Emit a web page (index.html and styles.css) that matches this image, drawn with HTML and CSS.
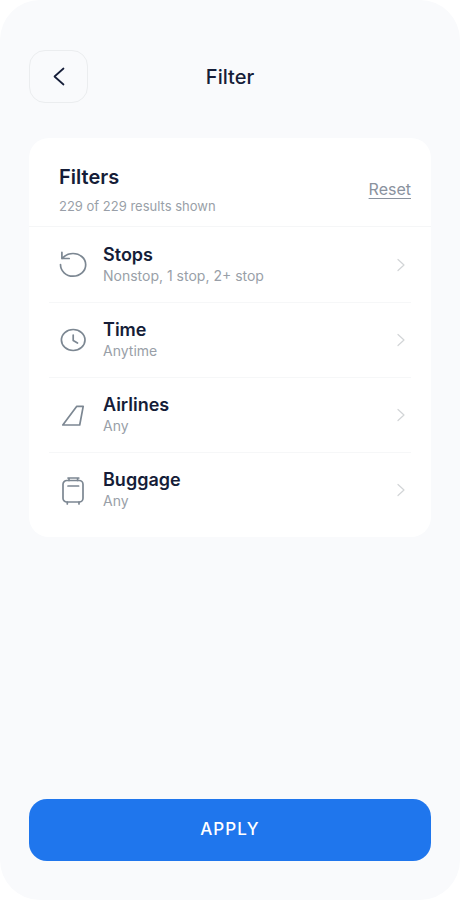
FILE: index.html
```html
<!DOCTYPE html>
<html lang="en">
<head>
<meta charset="utf-8">
<meta name="viewport" content="width=device-width, initial-scale=1">
<title>Filter</title>
<link rel="stylesheet" href="styles.css">
</head>
<body>
<div class="screen">
  <header class="topbar">
    <button class="back" type="button" aria-label="Back">
      <svg width="12" height="20" viewBox="0 0 12 20"><path d="M10.500 1.500 1.500 9.500l9 8"/></svg>
    </button>
    <h1 class="title">Filter</h1>
  </header>

  <main class="card">
    <div class="card-head">
      <div>
        <h2 class="card-title">Filters</h2>
        <p class="count">229 of 229 results shown</p>
      </div>
      <a class="reset" href="#">Reset</a>
    </div>
    <ul class="rows">
      <li class="item">
        <button class="row" type="button">
          <svg class="icon" width="30" height="30" viewBox="0 0 30 30"><path d="M2.500 14.500C2.500 21 8 26.200 15 26.200S27.700 21.200 27.700 14.800 22 3.500 15 3.500C10.300 3.500 6.800 5.300 4.200 8.500M3.900 2.300V8.500H11.200"/></svg>
          <span class="text"><span class="name">Stops</span><span class="value">Nonstop, 1 stop, 2+ stop</span></span>
          <svg class="chevron" width="10" height="14" viewBox="0 0 10 14"><path d="M2 1.500 8 7l-6 5.500"/></svg>
        </button>
      </li>
      <li class="item">
        <button class="row" type="button">
          <svg class="icon" width="30" height="30" viewBox="0 0 30 30"><ellipse cx="15.200" cy="15" rx="11.800" ry="10.500"/><path d="M15.200 10V15.500L19.500 18"/></svg>
          <span class="text"><span class="name">Time</span><span class="value">Anytime</span></span>
          <svg class="chevron" width="10" height="14" viewBox="0 0 10 14"><path d="M2 1.500 8 7l-6 5.500"/></svg>
        </button>
      </li>
      <li class="item">
        <button class="row" type="button">
          <svg class="icon" width="30" height="30" viewBox="0 0 30 30"><path d="M18.800 6.300H25.200L21.700 25H4.800Z"/></svg>
          <span class="text"><span class="name">Airlines</span><span class="value">Any</span></span>
          <svg class="chevron" width="10" height="14" viewBox="0 0 10 14"><path d="M2 1.500 8 7l-6 5.500"/></svg>
        </button>
      </li>
      <li class="item">
        <button class="row" type="button">
          <svg class="icon" width="30" height="30" viewBox="0 0 30 30"><rect x="5" y="5.500" width="20" height="21.500" rx="3.800"/><path d="M11 5.500V3M19.600 5.500V3M10 3H20.800M10 11H20.600M9.300 27V29M21 27V29"/></svg>
          <span class="text"><span class="name">Buggage</span><span class="value">Any</span></span>
          <svg class="chevron" width="10" height="14" viewBox="0 0 10 14"><path d="M2 1.500 8 7l-6 5.500"/></svg>
        </button>
      </li>
    </ul>
  </main>

  <button class="apply" type="button">APPLY</button>
</div>
</body>
</html>
```
FILE: styles.css
```css
* {
  box-sizing: border-box;
}

body {
  margin: 0;
  background: #fff;
  color: #151d38;
  font-family: Inter, "Open Sans", sans-serif;
}

button {
  font: inherit;
  color: inherit;
  cursor: pointer;
}

svg {
  fill: none;
  stroke-linecap: round;
  stroke-linejoin: round;
}

h1, h2, p, ul {
  margin: 0;
  padding: 0;
}

.screen {
  display: flex;
  flex-direction: column;
  min-height: 100vh;
  padding: 50px 29px 39px;
  border-radius: 40px;
  background: #f9fafc;
}

.topbar {
  display: grid;
  grid-template-columns: 59px 1fr 59px;
  align-items: center;
  margin-bottom: 35px;
}

.back {
  display: flex;
  align-items: center;
  justify-content: center;
  height: 53px;
  padding: 0;
  border: 1px solid #ebedef;
  border-radius: 16px;
  background: none;
  stroke: #151d38;
  stroke-width: 1.7;
}

.title {
  font-size: 20px;
  font-weight: 500;
  line-height: 24px;
  text-align: center;
}

.card {
  border-radius: 20px;
  background: #fff;
  padding-bottom: 10px;
}

.card-head {
  display: flex;
  align-items: center;
  justify-content: space-between;
  padding: 25px 20px 8px 30px;
  border-bottom: 1px solid #f5f6f7;
}

.card-title {
  font-size: 20px;
  font-weight: 600;
  line-height: 28px;
}

.count {
  color: #999fa8;
  font-size: 13px;
  line-height: 24px;
  padding-top: 3px;
}

.reset {
  color: #8a929e;
  font-size: 16px;
  line-height: 24px;
  padding-bottom: 4px;
  text-underline-offset: 3px;
}

.rows {
  list-style: none;
  padding: 0 20px;
}

.item + .item {
  border-top: 1px solid #f6f7f8;
}

.row {
  display: flex;
  align-items: center;
  gap: 15px;
  width: 100%;
  height: 75px;
  padding: 0 5px 0 9px;
  border: 0;
  background: none;
  text-align: left;
}

.item + .item .row {
  height: 74px;
}

.icon {
  stroke: #7c8792;
  stroke-width: 1.700;
}

.text {
  flex: 1;
}

.name,
.value {
  display: block;
}

.name {
  font-size: 18px;
  font-weight: 600;
  line-height: 22px;
}

.value {
  color: #999fa8;
  font-size: 14px;
  line-height: 20px;
}

.chevron {
  stroke: #d2d5d7;
  stroke-width: 1.200;
}

.apply {
  height: 62px;
  margin-top: auto;
  padding: 0 0 3px;
  border: 0;
  border-radius: 18px;
  background: #1f76ed;
  color: #fff;
  font-size: 17px;
  font-weight: 500;
  letter-spacing: 1px;
}
```
